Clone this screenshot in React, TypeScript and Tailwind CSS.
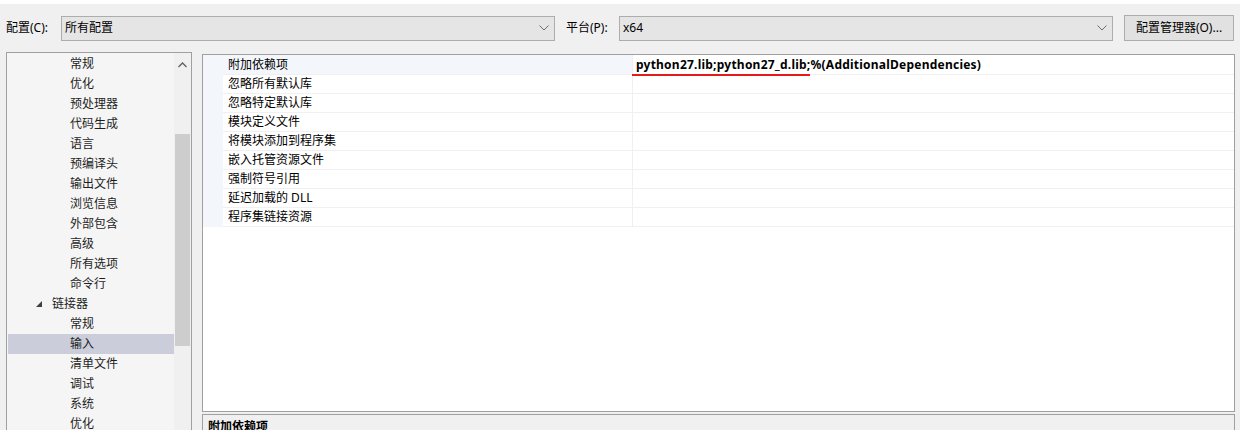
import React from "react"

const font = {
  fontFamily: '"Noto Sans", "Noto Sans CJK SC", sans-serif',
}

const treeItems: { label: string; level: number; expanded?: boolean; selected?: boolean }[] = [
  { label: "常规", level: 2 },
  { label: "优化", level: 2 },
  { label: "预处理器", level: 2 },
  { label: "代码生成", level: 2 },
  { label: "语言", level: 2 },
  { label: "预编译头", level: 2 },
  { label: "输出文件", level: 2 },
  { label: "浏览信息", level: 2 },
  { label: "外部包含", level: 2 },
  { label: "高级", level: 2 },
  { label: "所有选项", level: 2 },
  { label: "命令行", level: 2 },
  { label: "链接器", level: 1, expanded: true },
  { label: "常规", level: 2 },
  { label: "输入", level: 2, selected: true },
  { label: "清单文件", level: 2 },
  { label: "调试", level: 2 },
  { label: "系统", level: 2 },
  { label: "优化", level: 2 },
]

const props = [
  "附加依赖项",
  "忽略所有默认库",
  "忽略特定默认库",
  "模块定义文件",
  "将模块添加到程序集",
  "嵌入托管资源文件",
  "强制符号引用",
  "延迟加载的 DLL",
  "程序集链接资源",
]

const Chevron = () => (
  <svg width="10" height="6" viewBox="0 0 10 6" className="shrink-0">
    <path d="M0.5 0.5 L5 5 L9.5 0.5" fill="none" stroke="#6d6d6d" strokeWidth="1" />
  </svg>
)

const Combo = ({ value }: { value: string }) => (
  <div className="w-[494px] h-[25px] flex items-center justify-between border border-[#adadad] bg-[#e5e5e5] pl-[3px] pr-[5px] text-[12px] text-black">
    <span>{value}</span>
    <Chevron />
  </div>
)

export default function App() {
  return (
    <div className="w-[1240px] h-[430px] bg-[#f0f0f0] overflow-hidden text-[12px] text-black" style={font}>
      <div className="h-[4px] bg-white" />

      {/* toolbar */}
      <div className="flex items-center h-[26px] mt-[11px]">
        <span className="w-[61px] pl-[6px]">配置(C):</span>
        <Combo value="所有配置" />
        <span className="w-[53px] ml-[11px]">平台(P):</span>
        <Combo value="x64" />
        <button className="ml-[11px] w-[110px] h-[26px] border border-[#adadad] bg-[#e1e1e1] text-[12px] text-black">
          配置管理器(O)...
        </button>
      </div>

      <div className="flex mt-[11px] ml-[6px]">
        {/* tree */}
        <div className="w-[186px] h-[400px] border border-[#a0a0a0] bg-[#f5f5f5] flex">
          <div className="flex-1 pl-[1px] pt-[1px]">
            {treeItems.map((it, i) => (
              <div
                key={i}
                className={`h-[20px] flex items-center ${it.selected ? "bg-[#cbcdda]" : ""} ${
                  it.level === 1 ? "pl-[28px]" : "pl-[62px]"
                }`}
              >
                {it.expanded && (
                  <svg width="6" height="6" viewBox="0 0 6 6" className="mr-[10px]">
                    <path d="M6 0 L6 6 L0 6 Z" fill="#404040" />
                  </svg>
                )}
                <span className="text-[#1e1e1e]">{it.label}</span>
              </div>
            ))}
          </div>
          <div className="w-[17px] bg-[#f0f0f0] flex flex-col items-center">
            <div className="h-[17px] flex items-center justify-center mt-[3px]">
              <svg width="9" height="6" viewBox="0 0 9 6">
                <path d="M0.5 5 L4.5 1 L8.5 5" fill="none" stroke="#606060" strokeWidth="1.3" />
              </svg>
            </div>
            <div className="mt-[61px] w-[15px] h-[212px] bg-[#cdcdcd]" />
          </div>
        </div>

        {/* right side */}
        <div className="ml-[10px] flex flex-col mt-[2px]">
          <div className="w-[1033px] h-[358px] border border-[#a0a0a0] bg-white">
            <div className="flex">
              <div className="w-[20px] h-[172px] bg-[#f3f6fb]" />
              <div className="flex-1">
                {props.map((p, i) => (
                  <div
                    key={i}
                    className={`flex border-b border-[#f0f0f0] ${i === 0 ? "h-[20px]" : "h-[19px]"}`}
                  >
                    <div
                      className={`w-[410px] flex items-center pl-[5px] border-r border-[#f0f0f0] ${
                        i === 0 ? "bg-[#f3f6fb] pt-[1px]" : ""
                      }`}
                    >
                      {p}
                    </div>
                    <div className={`flex-1 relative flex items-center pl-[3px] ${i === 0 ? "pt-[1px]" : ""}`}>
                      {i === 0 && (
                        <>
                          <span className="font-bold tracking-[0.23px]">
                            python27.lib;python27_d.lib;%(AdditionalDependencies)
                          </span>
                          <div className="absolute left-[-1px] top-[19px] w-[178px] h-[2px] bg-[#e8191b]" />
                        </>
                      )}
                    </div>
                  </div>
                ))}
              </div>
            </div>
          </div>
          <div className="mt-[2px] w-[1033px] h-[40px] border border-[#a0a0a0] bg-[#f0f0f0] pl-[5px] pt-[3px] font-bold">
            附加依赖项
          </div>
        </div>
      </div>
    </div>
  )
}
